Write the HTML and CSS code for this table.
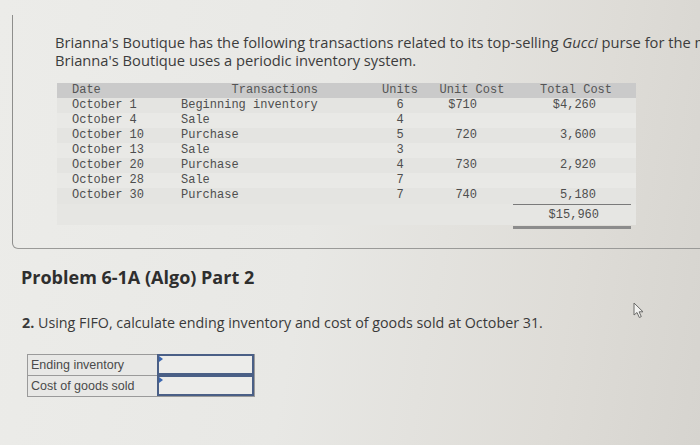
FILE: index.html
```html
<!DOCTYPE html>
<html>
<head>
<meta charset="utf-8">
<link rel="stylesheet" href="styles.css">
</head>
<body>
<div class="page">
  <section class="card">
    <p class="intro">Brianna's Boutique has the following transactions related to its top-selling <i>Gucci</i> purse for the month of October.<br>Brianna's Boutique uses a periodic inventory system.</p>
    <div class="ledger">
      <div class="row head">
        <span class="c1">Date</span><span class="c2">Transactions</span><span class="c3">Units</span><span class="c4">Unit Cost</span><span class="c5">Total Cost</span>
      </div>
      <div class="row"><span class="c1">October 1</span><span class="c2">Beginning inventory</span><span class="c3">6</span><span class="c4">$710</span><span class="c5">$4,260</span></div>
      <div class="row alt"><span class="c1">October 4</span><span class="c2">Sale</span><span class="c3">4</span><span class="c4"></span><span class="c5"></span></div>
      <div class="row"><span class="c1">October 10</span><span class="c2">Purchase</span><span class="c3">5</span><span class="c4">720</span><span class="c5">3,600</span></div>
      <div class="row alt"><span class="c1">October 13</span><span class="c2">Sale</span><span class="c3">3</span><span class="c4"></span><span class="c5"></span></div>
      <div class="row"><span class="c1">October 20</span><span class="c2">Purchase</span><span class="c3">4</span><span class="c4">730</span><span class="c5">2,920</span></div>
      <div class="row alt"><span class="c1">October 28</span><span class="c2">Sale</span><span class="c3">7</span><span class="c4"></span><span class="c5"></span></div>
      <div class="row"><span class="c1">October 30</span><span class="c2">Purchase</span><span class="c3">7</span><span class="c4">740</span><span class="c5">5,180</span></div>
      <div class="row total"><span class="c1"></span><span class="c2"></span><span class="c3"></span><span class="c4"></span><span class="c5 sum">$15,960</span></div>
    </div>
  </section>

  <h2 class="part">Problem 6-1A (Algo) Part 2</h2>
  <p class="question"><b>2.</b> Using FIFO, calculate ending inventory and cost of goods sold at October 31.</p>

  <div class="answers">
    <div class="arow"><span class="label">Ending inventory</span><span class="input"></span></div>
    <div class="arow"><span class="label">Cost of goods sold</span><span class="input"></span></div>
  </div>

  <svg class="cursor" width="12" height="18" viewBox="0 0 12 18"><path d="M1 1 L1 13 L4 10.5 L6.3 15.5 L8.3 14.6 L6.1 9.8 L10 9.8 Z" fill="#f2f2f0" stroke="#6a6a68" stroke-width="1" stroke-linejoin="round"/></svg>
</div>
</body>
</html>
```

FILE: styles.css
```css
html, body {
  margin: 0;
  padding: 0;
  width: 700px;
  height: 445px;
  overflow: hidden;
}
body {
  background: linear-gradient(100deg, #ecece9 0%, #e8e8e5 45%, #dedcd7 80%, #d6d4cf 100%);
  font-family: "Open Sans", Lato, sans-serif;
  color: #3a3a3a;
}
.page {
  position: relative;
  height: 445px;
  padding-top: 15px;
  box-sizing: border-box;
}
.card {
  margin: 0 0 0 12px;
  width: 740px;
  height: 234px;
  border-left: 1px solid #8e8e8c;
  border-bottom: 1px solid #9a9a98;
  border-bottom-left-radius: 6px;
  box-sizing: border-box;
  padding: 18px 0 0 42px;
}
.intro {
  margin: 0;
  font-size: 14.7px;
  line-height: 18px;
  white-space: nowrap;
  color: #3c3c3c;
}
.intro i { font-style: italic; }
.ledger {
  margin: 14px 0 0 2px;
  width: 579px;
  font-family: "Liberation Mono", "DejaVu Sans Mono", monospace;
  font-size: 12px;
  color: #4e4e4e;
  background: #e4e4e1;
}
.row {
  display: grid;
  grid-template-columns: 118px 197px 56px 88px 120px;
  height: 15px;
  line-height: 15px;
}
.row.alt { background: #e9e9e6; }
.row.head { background: #cacaca; color: #555; }
.c1 { padding-left: 15px; }
.c2 { padding-left: 6px; }
.c3 { text-align: center; }
.c4 { text-align: right; padding-right: 39px; }
.c5 { text-align: right; padding-right: 40px; }
.head .c2 { text-align: right; padding-right: 54px; }
.head .c4, .head .c5 { text-align: center; padding-right: 0; }
.row:nth-last-child(2) { height: 16px; }
.row.total {
  height: 21px;
  line-height: 21px;
  background: #e6e6e3;
}
.row.total .c5 {
  border-top: 1px solid #7a7a7a;
  border-bottom: 3px solid #8c8c8c;
  margin: 0 5px 0 -3px;
  padding-right: 32px;
}
.part {
  margin: 16px 0 0 21px;
  font-size: 18px;
  line-height: 24px;
  font-weight: 700;
  color: #2e2e2e;
}
.question {
  margin: 25px 0 0 22px;
  font-size: 14.3px;
  line-height: 18px;
  color: #3a3a3a;
}
.question b { font-weight: 700; }
.answers {
  margin: 22px 0 0 27px;
  width: 226px;
  border: 1px solid #9a9a9a;
  font-family: "Liberation Sans", Arial, sans-serif;
  font-size: 12.5px;
  color: #4a4a4a;
}
.arow {
  display: grid;
  grid-template-columns: 130px 95px;
  height: 20px;
}
.arow + .arow { border-top: 1px solid #9a9a9a; }
.label {
  padding-left: 3px;
  line-height: 20px;
  background: #e8e8e6;
  border-right: 1px solid #9a9a9a;
}
.input {
  position: relative;
  border: 2px solid #4a5f86;
  margin: -1px -1px 0 -1px;
  background: #ececea;
}
.input::before {
  content: "";
  position: absolute;
  left: 0;
  top: 0;
  border-top: 3px solid transparent;
  border-bottom: 3px solid transparent;
  border-left: 4px solid #3a66b0;
}
.cursor {
  position: absolute;
  left: 633px;
  top: 302px;
}
```
